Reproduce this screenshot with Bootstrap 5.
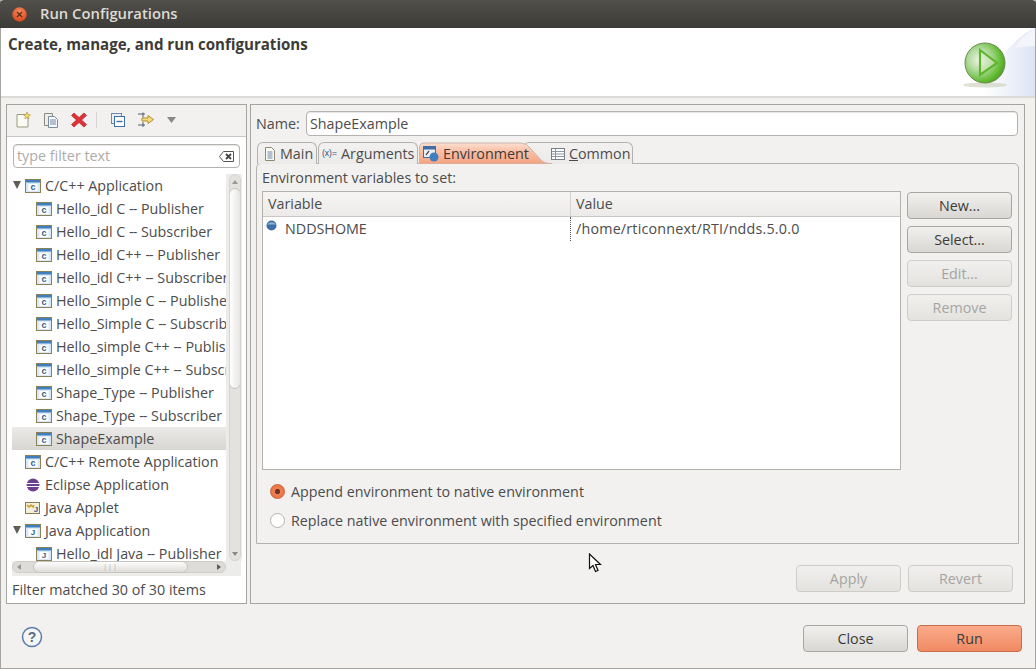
<!DOCTYPE html>
<html lang="en">
<head>
<meta charset="utf-8">
<title>Run Configurations</title>
<link href="https://cdn.jsdelivr.net/npm/bootstrap@5.3.0/dist/css/bootstrap.min.css" rel="stylesheet">
<style>
html,body{height:669px;overflow:hidden}
body{width:1036px;background:#f2f1f0;color:#4c4c4c;font-family:"Open Sans","Noto Sans",sans-serif;font-size:14.3px;line-height:20px}
.win{height:669px;border:solid #a5a4a1;border-width:0 1px 1px 1px;position:relative}
.ttl{height:28px;margin:0 -1px;background:linear-gradient(#504f4a,#3c3b37);color:#dfdbd2;font-weight:600;font-size:14.8px;padding:0 0 2px 40px;position:relative;border-radius:4px 4px 0 0}
.closeb{position:absolute;left:12px;top:7px;width:15px;height:15px}
.hdr{height:70px;background:#fff;border-bottom:2px solid #dcdad7;padding:6px 7px;position:relative;overflow:hidden;font-weight:700;font-size:15.1px;color:#3c3b37}
.hdr svg{position:absolute;right:0;top:0}
.mainr{padding:6px 10px 0 5px;gap:3px;height:506px}
.pane{border:1px solid #a5a4a1;height:100%}
.lp{width:241px;background:#fff;display:flex;flex-direction:column}
.rp{width:775px;padding:6px 5px 0 5px;display:flex;flex-direction:column}
.tb{height:32px;background:#f2f1f0;border-bottom:1px solid #c8c6c2;padding:0 0 0 2px}
.tb svg{display:block}
.tbi{width:28px;height:22px;display:flex;align-items:center;justify-content:center}
.tbl{width:22px}
.sep{width:1px;height:16px;background:#d8d6d2;margin:0 7px 0 3px}
.filt{margin:7px 6px 6px;height:25px;border:1px solid #b4b2ae;border-radius:4px;padding:0 5px 0 3px;background:#fff;color:#aeaca8;box-shadow:inset 0 1px 1px #e6e5e3}
.treewrap{height:387px;margin-left:5px}
.trv{width:214px;overflow:hidden;white-space:nowrap;height:387px}
.trow{height:23px;display:flex;align-items:center;color:#4c4c4c}
.trow svg{flex:none}
.dd{letter-spacing:-1px;margin-right:1px}
.r0{padding-left:13px}
.r0 svg{margin-right:4px}
.rt{padding-left:1px}
.rt svg{margin-right:4px}
.r1{padding-left:24px}
.r1 svg{margin-right:4px}
.twist{width:0;height:0;border-left:4px solid transparent;border-right:4px solid transparent;border-top:8px solid #5d5d5a;margin:-2px 4px 0 0;flex:none}
.tsel{background:linear-gradient(#eceae8,#d8d6d3)}
.vsb{width:16px;height:387px;background:#ececea;padding:0 1px 0 3px;flex:none}
.vtrack{width:12px;height:387px;border:1px solid #d6d4d1;border-radius:6px;background:#e4e2df;overflow:hidden;display:flex;flex-direction:column;align-items:center}
.varr{height:13px;flex:none;display:flex;align-items:center;justify-content:center}
.vth{height:201px;width:12px;border:1px solid #c6c4c0;border-radius:6px;background:linear-gradient(90deg,#fff,#e8e6e3);flex:none}
.vgap{flex:1;background:#dedcd9}
.upa{width:0;height:0;border-left:3px solid transparent;border-right:3px solid transparent;border-bottom:4px solid #9a9895}
.dna{width:0;height:0;border-left:3px solid transparent;border-right:3px solid transparent;border-top:4px solid #8a8885}
.hsb{height:15px;width:229px;margin-left:5px;background:#ececea;padding:0 15px 0 0;box-sizing:border-box}
.htrack{height:12px;border:1px solid #d0cec9;border-radius:6px;background:#dedcd9;display:flex;align-items:center}
.hth{width:155px;height:12px;margin-left:12px;border:1px solid #c6c4c0;border-radius:6px;background:linear-gradient(#fdfdfc,#dfddda);display:flex;align-items:center;justify-content:center;color:#aaa;font-size:7px;letter-spacing:1px}
.lfa{width:0;height:0;border-top:3px solid transparent;border-bottom:3px solid transparent;border-right:4px solid #9a9895;margin-left:4px}
.rta{width:0;height:0;border-top:3px solid transparent;border-bottom:3px solid transparent;border-left:4px solid #5d5d5a;margin-left:auto;margin-right:4px}
.stat{padding:4px 5px 0 5px;height:27px}
.nm{height:25px;margin-bottom:6px}
.nmi{width:712px;height:25px;margin-left:auto;margin-right:1px;border:1px solid #b4b2ae;border-radius:4px;background:#fff;padding:0 3px;line-height:23px;color:#4c4c4c;box-shadow:inset 0 1px 1px #e6e5e3}
.tabsrow{height:22px;position:relative;z-index:1;margin-bottom:-1px;padding-left:1px;flex-wrap:nowrap}
.etab{height:22px;padding:1px 0 0 5px;display:flex;align-items:center;gap:3px;border:1px solid #b4b2ae;border-bottom:0;border-radius:6px 6px 0 0;color:#4c4c4c;background:linear-gradient(#f2f1f0,#ecebe9);white-space:nowrap;margin-right:1px}
.etab svg{flex:none}
.tm{width:60px}
.ta{width:100px;padding-left:3px;gap:3px}
.eact{position:relative;width:130px;border:0;background:transparent;padding:1px 0 0 4px;margin-right:-26px;color:#3c3b37;z-index:1;gap:4px}
.eact .tabbg{position:absolute;left:0;top:0}
.eact>span,.eact>.tabic{position:relative}
.tc{width:110px;padding-left:27px;gap:4px;margin-right:0}
.tbody{height:381px;border:1px solid #b4b2ae;border-radius:5px 5px 0 0;padding:4px 5px 0 5px;width:763px}
.lb{height:20px;margin-bottom:3px}
.tblw{width:639px;height:279px;border:1px solid #b4b2ae;background:#fff;flex:none}
.thd{height:25px;background:linear-gradient(#f6f5f4,#ecebe9);border-bottom:1px solid #c9c7c3}
.thd div{padding:2px 5px}
.c1{width:308px;flex:none;border-right:1px solid #d4d2cf}
.rw{height:24px}
.rw .c1{border-right:1px dotted #555;padding:0 0 0 3px;display:flex;align-items:center;gap:8px;height:24px}
.rw .c2{padding:1px 5px;line-height:22px;letter-spacing:.2px}
.sbtns{width:105px;margin-left:6px;gap:7px;padding-top:1px;flex:none}
.ebtn{width:105px;height:27px;padding:0;font-size:14.3px;line-height:25px;border:1px solid #a8a6a2;border-radius:4px;background:linear-gradient(#f1f0ee,#d9d7d4);color:#3c3b37;--bs-btn-hover-bg:#e6e5e3}
.ebtn:disabled{opacity:1;background:linear-gradient(#f1f0ee,#e3e2df);border-color:#cfcdc9;color:#a6a5a1}
.erun{background:linear-gradient(#fbab8b,#f08a62);border-color:#c96e4b}
.rad{height:29px;padding-left:8px;gap:6px;margin:0}
.rads{padding-top:7px}
.cr{width:15px;height:15px;flex:none;border-radius:50%;border:1px solid #b5b3af;background:#fff}
.cron{background:radial-gradient(circle,#6b3522 0 2.2px,#ef8055 3px,#e9693a 100%);border-color:#c9623c}
.apr{padding-top:21px;gap:7px;justify-content:flex-end;padding-right:6px}
.foot{height:62px;padding:21px 13px 0 20px}
.foot .ebtn+.ebtn{margin-left:9px}
.helpi{margin-top:1px}
.cursor{position:absolute;left:587px;top:553px}
</style>
</head>
<body>
<svg width="0" height="0" class="position-absolute">
<defs>
<symbol id="ifile" viewBox="0 0 16 16"><rect x="0.5" y="1.500" width="15" height="13" fill="#dbe9f6" stroke="#8a7f55"/><rect x="1" y="2" width="14" height="2.500" fill="#3f7fbe"/><rect x="3.500" y="6" width="9" height="7" fill="#fff"/><text x="8" y="12.400" text-anchor="middle" font-size="9" font-weight="700" fill="#2f5d8e" font-family="Liberation Sans">c</text></symbol>
<symbol id="jfile" viewBox="0 0 16 16"><rect x="0.5" y="1.500" width="15" height="13" fill="#dbe9f6" stroke="#8a7f55"/><rect x="1" y="2" width="14" height="2.500" fill="#3f7fbe"/><rect x="3.500" y="6" width="9" height="7" fill="#fff"/><text x="8" y="12.400" text-anchor="middle" font-size="8" font-weight="700" fill="#2f5d8e" font-family="Liberation Sans">J</text></symbol>
</defs>
</svg>
<div class="win">
  <div class="ttl d-flex align-items-center">
    <svg class="closeb" viewBox="0 0 15 15"><defs><radialGradient id="rg" cx=".5" cy=".3" r=".7"><stop offset="0" stop-color="#f58a5c"/><stop offset="1" stop-color="#d9471c"/></radialGradient></defs><circle cx="7.500" cy="7.500" r="7.200" fill="url(#rg)"/><path d="M5 5l5 5M10 5l-5 5" stroke="#5a2a18" stroke-width="1.400"/></svg>
    Run Configurations
  </div>
  <div class="hdr">
    <svg width="170" height="68" viewBox="0 0 170 68">
      <defs>
        <linearGradient id="bn" x1="0" y1="0" x2="1" y2="0"><stop offset="0" stop-color="#fff"/><stop offset="1" stop-color="#dde4f4"/></linearGradient>
        <radialGradient id="gb" cx=".36" cy=".42" r=".68"><stop offset="0" stop-color="#eef5e8"/><stop offset=".4" stop-color="#b4dba0"/><stop offset=".8" stop-color="#5fbb30"/><stop offset="1" stop-color="#4f9a28"/></radialGradient>
      </defs>
      <path d="M118 68 C128 35 148 10 170 0 V68Z" fill="url(#bn)"/>
      <path d="M150 20 C155 10 163 5 170 0 V18 C163 18 156 19 150 20Z" fill="#f3f5fb"/>
      <ellipse cx="120" cy="57" rx="22" ry="2.500" fill="#c7cdb8" opacity=".6"/>
      <circle cx="120" cy="35" r="20" fill="url(#gb)" stroke="#6d8a4f"/>
      <path d="M115 22 L132 35 L115 47Z" fill="#dff0d2" fill-opacity=".35" stroke="#5fb52c" stroke-width="2.200"/>
    </svg>
    Create, manage, and run configurations
  </div>
  <div class="mainr d-flex">
    <div class="pane lp">
      <div class="tb d-flex align-items-center">
        <span class="tbi"><svg width="18" height="18" viewBox="0 0 18 18"><path d="M3 3.500h8l3 3V16H3z" fill="#fbfbf5" stroke="#9a9a80"/><path d="M13 1l1 2.400 2.400.6-2 1.400.4 2.400-1.800-1.300-2 1.300.5-2.400-1.900-1.400 2.500-.6z" fill="#f6dc6a" stroke="#a58a25" stroke-width=".6"/></svg></span>
        <span class="tbi"><svg width="18" height="18" viewBox="0 0 18 18"><path d="M2.500 2.500h8v12h-8z" fill="#e8eef5" stroke="#8f8a70"/><path d="M6.500 5.500h6l3 3v8h-9z" fill="#f6f8fb" stroke="#7b8aa0"/><path d="M8 9h6M8 11h6M8 13h6" stroke="#6f87a8"/></svg></span>
        <span class="tbi"><svg width="18" height="18" viewBox="0 0 18 18"><path d="M4 2l5 4.500 5-4.500 2.500 2.500-5 4.500 5 4.500-2.500 2.500-5-4.500-5 4.500-2.500-2.500 5-4.500-5-4.500z" fill="#e0323a" stroke="#b01e26" stroke-width=".7"/></svg></span>
        <span class="sep"></span>
        <span class="tbi"><svg width="16" height="16" viewBox="0 0 16 16"><rect x="1.500" y="1.500" width="10" height="10" fill="#e9eff7" stroke="#6f87a8"/><rect x="4.500" y="4.500" width="10" height="10" fill="#fff" stroke="#3f6ea5"/><path d="M6.500 9.500h6" stroke="#3f6ea5" stroke-width="1.400"/></svg></span>
        <span class="tbi"><svg width="18" height="18" viewBox="0 0 18 18"><path d="M1 3h7M6 1.500v5M1 14h7M6 11v5" stroke="#555d66"/><path d="M5 7h6V4.500L16.500 8.500 11 12.500V10H5z" fill="#f7dc82" stroke="#b08d2a"/></svg></span>
        <span class="tbi tbl"><svg width="9" height="6" viewBox="0 0 9 6"><path d="M0 0h9L4.500 6z" fill="#8a8885"/></svg></span>
      </div>
      <div class="filt d-flex align-items-center justify-content-between">type filter text
        <svg width="15" height="11" viewBox="0 0 15 11"><path d="M4.500.5H14.500V10.500H4.500L.5 5.500z" fill="#fff" stroke="#555"/><path d="M7 3l5 5M12 3l-5 5" stroke="#444" stroke-width="1.800"/></svg>
      </div>
      <div class="treewrap d-flex">
        <div class="trv">
          <div class="trow rt"><span class="twist"></span><svg width="16" height="16"><use href="#ifile"/></svg>C/C++ Application</div>
          <div class="trow r1"><svg width="16" height="16"><use href="#ifile"/></svg><span>Hello_idl C <span class="dd">--</span> Publisher</span></div>
          <div class="trow r1"><svg width="16" height="16"><use href="#ifile"/></svg><span>Hello_idl C <span class="dd">--</span> Subscriber</span></div>
          <div class="trow r1"><svg width="16" height="16"><use href="#ifile"/></svg><span>Hello_idl C++ <span class="dd">--</span> Publisher</span></div>
          <div class="trow r1"><svg width="16" height="16"><use href="#ifile"/></svg><span>Hello_idl C++ <span class="dd">--</span> Subscriber</span></div>
          <div class="trow r1"><svg width="16" height="16"><use href="#ifile"/></svg><span>Hello_Simple C <span class="dd">--</span> Publisher</span></div>
          <div class="trow r1"><svg width="16" height="16"><use href="#ifile"/></svg><span>Hello_Simple C <span class="dd">--</span> Subscriber</span></div>
          <div class="trow r1"><svg width="16" height="16"><use href="#ifile"/></svg><span>Hello_simple C++ <span class="dd">--</span> Publisher</span></div>
          <div class="trow r1"><svg width="16" height="16"><use href="#ifile"/></svg><span>Hello_simple C++ <span class="dd">--</span> Subscriber</span></div>
          <div class="trow r1"><svg width="16" height="16"><use href="#ifile"/></svg><span>Shape_Type <span class="dd">--</span> Publisher</span></div>
          <div class="trow r1"><svg width="16" height="16"><use href="#ifile"/></svg><span>Shape_Type <span class="dd">--</span> Subscriber</span></div>
          <div class="trow r1 tsel"><svg width="16" height="16"><use href="#ifile"/></svg>ShapeExample</div>
          <div class="trow r0"><svg width="16" height="16"><use href="#ifile"/></svg>C/C++ Remote Application</div>
          <div class="trow r0"><svg width="16" height="16" viewBox="0 0 16 16"><circle cx="8" cy="8" r="6.500" fill="#6d3f8f"/><path d="M1 6.500h14M1 9.500h14" stroke="#fff" stroke-width="1"/></svg>Eclipse Application</div>
          <div class="trow r0"><svg width="16" height="16" viewBox="0 0 16 16"><rect x=".5" y="2.500" width="14" height="11" fill="#f3efd8" stroke="#857c55"/><path d="M2 5l2 2 2-2 2 2 1-2" stroke="#d39a25" fill="none" stroke-width="1.500"/><text x="11" y="12" font-size="8" font-weight="700" fill="#2f5d8e" text-anchor="middle" font-family="Liberation Sans">J</text></svg>Java Applet</div>
          <div class="trow rt"><span class="twist"></span><svg width="16" height="16"><use href="#jfile"/></svg>Java Application</div>
          <div class="trow r1"><svg width="16" height="16"><use href="#jfile"/></svg><span>Hello_idl Java <span class="dd">--</span> Publisher</span></div>
        </div>
        <div class="vsb">
          <div class="vtrack"><div class="varr"><span class="upa"></span></div><div class="vth"></div><div class="vgap"></div><div class="varr"><span class="dna"></span></div></div>
        </div>
      </div>
      <div class="hsb"><div class="htrack"><span class="lfa"></span><div class="hth">|||</div><span class="rta"></span></div></div>
      <div class="stat">Filter matched 30 of 30 items</div>
    </div>
    <div class="pane rp">
      <div class="nm d-flex align-items-center">Name:<div class="nmi">ShapeExample</div></div>
      <div class="tabsrow d-flex">
        <div class="etab tm"><svg width="14" height="16" viewBox="0 0 14 16"><path d="M2.500 1.500h6l3 3v10h-9z" fill="#f9f9f4" stroke="#8d8a72"/><path d="M4.500 6h5M4.500 8h5M4.500 10h5M4.500 12h5" stroke="#6f87a8"/></svg>Main</div>
        <div class="etab ta"><svg width="16" height="12" viewBox="0 0 16 12"><text x="0" y="8" font-size="8.500" font-family="Liberation Sans" fill="#2b4d7c">(x)=</text></svg>Arguments</div>
        <div class="etab eact">
          <svg class="tabbg" width="134" height="22" viewBox="0 0 134 22"><defs><linearGradient id="og" x1="0" y1="0" x2="0" y2="1"><stop offset="0" stop-color="#fbe0d2"/><stop offset=".35" stop-color="#fac3aa"/><stop offset="1" stop-color="#f4a280"/></linearGradient></defs><path d="M.5 22V6Q.5 1 5 1H102Q108 1 112 7L122 18Q125 21.500 133 21.500V22Z" fill="url(#og)" stroke="#c9b7ad"/></svg>
          <svg class="tabic" width="16" height="16" viewBox="0 0 16 16"><rect x=".5" y=".5" width="12" height="11" fill="#e8eef5" stroke="#3f6ea5"/><rect x="1" y="1" width="11" height="2.500" fill="#3f6ea5"/><path d="M3 9l3-4" stroke="#333" stroke-width="1.200"/><circle cx="11" cy="11" r="4.500" fill="#3f7fbe"/></svg>
          <span>Environment</span>
        </div>
        <div class="etab tc"><svg width="14" height="12" viewBox="0 0 14 12"><rect x=".5" y=".5" width="13" height="11" fill="#fff" stroke="#7a7f8a"/><path d="M1 3.500h12M1 6h12M1 8.500h12M4.500 1v10" stroke="#8d97a8"/></svg><span><u>C</u>ommon</span></div>
      </div>
      <div class="tbody">
        <div class="lb">Environment variables to set:</div>
        <div class="d-flex">
          <div class="tblw">
            <div class="thd d-flex"><div class="c1">Variable</div><div>Value</div></div>
            <div class="rw d-flex"><div class="c1"><svg width="11" height="11" viewBox="0 0 11 11" class="mb-2"><circle cx="5.500" cy="5.500" r="5" fill="#3f6ea5"/><path d="M1 4.500a5 4 0 0 1 9 0z" fill="#8fb0d6"/></svg><span>NDDSHOME</span></div><div class="c2">/home/rticonnext/RTI/ndds.5.0.0</div></div>
          </div>
          <div class="sbtns d-flex flex-column">
            <button class="btn ebtn">New...</button>
            <button class="btn ebtn">Select...</button>
            <button class="btn ebtn" disabled>Edit...</button>
            <button class="btn ebtn" disabled>Remove</button>
          </div>
        </div>
        <div class="rads">
          <div class="rad d-flex align-items-center"><span class="cr cron"></span>Append environment to native environment</div>
          <div class="rad d-flex align-items-center"><span class="cr"></span>Replace native environment with specified environment</div>
        </div>
      </div>
      <div class="apr d-flex">
        <button class="btn ebtn" disabled>Apply</button>
        <button class="btn ebtn" disabled>Revert</button>
      </div>
    </div>
  </div>
  <div class="foot d-flex align-items-start">
    <svg width="22" height="22" viewBox="0 0 22 22" class="me-auto helpi"><circle cx="11" cy="11" r="9.500" fill="#f4f6f9" stroke="#5d7ea8" stroke-width="1.500"/><text x="11" y="16" font-size="14" font-weight="700" fill="#5f6a78" text-anchor="middle" font-family="Liberation Sans">?</text></svg>
    <button class="btn ebtn">Close</button>
    <button class="btn ebtn erun">Run</button>
  </div>
  <svg class="cursor" width="14" height="20" viewBox="0 0 14 20"><path d="M1.500 1V15.500L5 12.500 7.500 18.500 10 17.500 7.500 11.500H12.500z" fill="#fff" stroke="#111" stroke-width="1.200"/></svg>
</div>
<script src="https://cdn.jsdelivr.net/npm/bootstrap@5.3.0/dist/js/bootstrap.bundle.min.js"></script>
</body>
</html>
